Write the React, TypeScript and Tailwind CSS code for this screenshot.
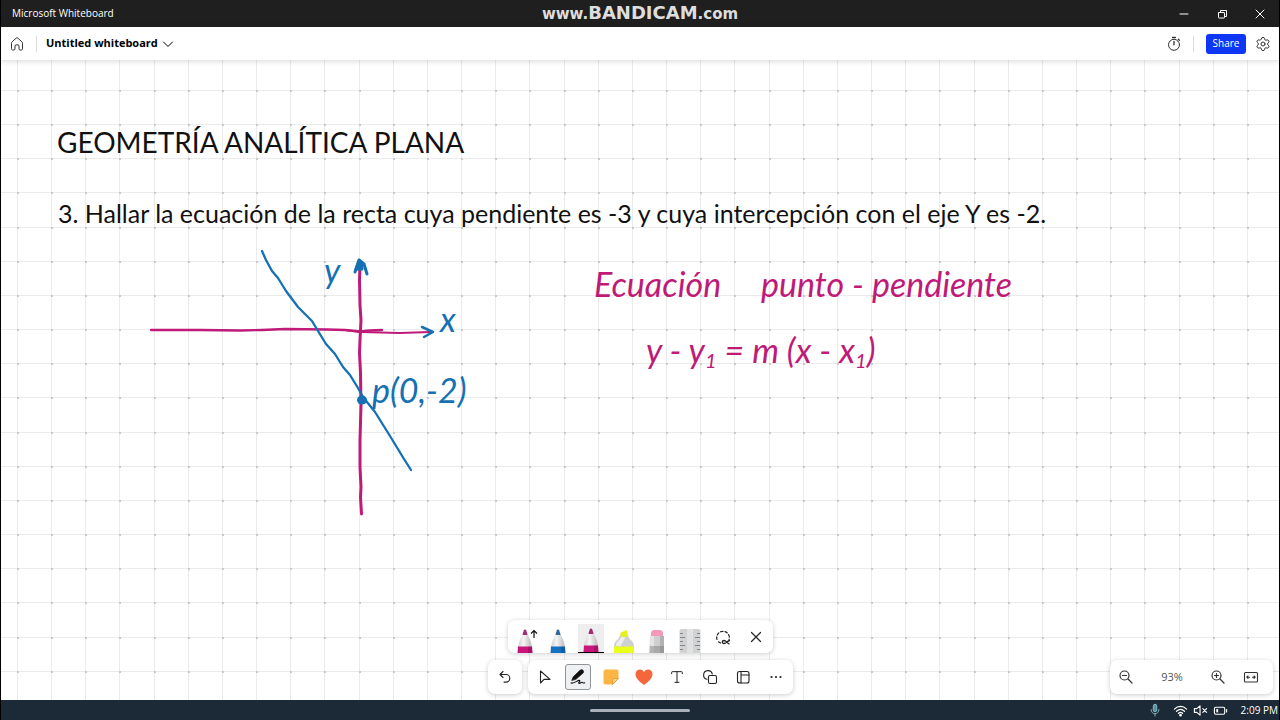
import React from 'react';
import clsx from 'clsx';
import { Settings, Type } from 'lucide-react';

const PINK = '#c01a78';
const BLUE = '#1570b4';

type IconProps = {
  size?: number;
  viewBox?: string;
  strokeWidth?: number;
  children: React.ReactNode;
};

function Icon({ size = 16, viewBox = '0 0 16 16', strokeWidth = 1, children }: IconProps) {
  return (
    <svg
      width={size}
      height={size}
      viewBox={viewBox}
      fill="none"
      stroke="currentColor"
      strokeWidth={strokeWidth}
      strokeLinecap="round"
      strokeLinejoin="round"
      aria-hidden="true"
    >
      {children}
    </svg>
  );
}

function TitleBar() {
  return (
    <div className="grid h-[27px] shrink-0 grid-cols-3 items-center bg-[#1f1f1f] text-white">
      <span className="pl-[11px] text-[10px]">Microsoft Whiteboard</span>
      <span className="whitespace-nowrap text-center font-['DejaVu_Sans'] text-[15px] font-bold leading-5 text-[#dedede]">
        www.<b className="text-[18px]">BANDICAM</b>.com
      </span>
      <div className="flex justify-end gap-3 pr-[6px]">
        <button aria-label="Minimize" className="flex h-[26px] w-[26px] items-center justify-center">
          <Icon>
            <path d="M4 8h8" />
          </Icon>
        </button>
        <button aria-label="Restore" className="flex h-[26px] w-[26px] items-center justify-center">
          <Icon>
            <rect x="4.5" y="6.5" width="6" height="5.5" rx="0.5" />
            <path d="M6.5 6.5V4.5h6v6h-2" />
          </Icon>
        </button>
        <button aria-label="Close" className="flex h-[26px] w-[26px] items-center justify-center">
          <Icon>
            <path d="M4 4l8 8M12 4l-8 8" />
          </Icon>
        </button>
      </div>
    </div>
  );
}

function Header() {
  return (
    <header className="z-10 flex h-[33px] shrink-0 items-center justify-between bg-white pl-[7px] pr-2 shadow-[0_1px_6px_rgba(0,0,0,0.16)]">
      <div className="flex items-center">
        <button aria-label="Home" className="flex w-[17px] justify-center text-[#333]">
          <Icon>
            <path d="M2.5 7.2c0-.6.2-1 .6-1.4L7.2 2.1a1.2 1.2 0 0 1 1.6 0l4.1 3.7c.4.4.6.8.6 1.4v5.6c0 .7-.4 1.2-1.1 1.2h-1.3c-.7 0-1.1-.4-1.1-1.1V10c0-.7-.4-1.1-1-1.1H7c-.6 0-1 .4-1 1.1v2.900c0 .7-.4 1.1-1.1 1.1H3.6c-.7 0-1.1-.5-1.1-1.2z" />
          </Icon>
        </button>
        <span className="ml-[11px] h-4 w-px bg-[#dcdcdc]" />
        <button className="ml-[9px] flex items-center gap-1 text-[11px] font-bold text-black">
          Untitled whiteboard
          <Icon size={12} viewBox="0 0 12 12">
            <path d="M1.5 4L6 8.5 10.5 4" />
          </Icon>
        </button>
      </div>
      <div className="flex items-center">
        <button aria-label="Timer" className="text-[#333]">
          <Icon>
            <circle cx="8" cy="8.8" r="5.5" />
            <path d="M8 5.5v3.3M6.5 1.5h3M12.3 3.2l1.1 1.1" strokeWidth="1.3" />
          </Icon>
        </button>
        <span className="ml-[11px] h-4 w-px bg-[#dcdcdc]" />
        <button className="ml-[12px] h-5 w-10 rounded-[3px] bg-[#0d37f5] text-[10px] font-medium text-white">
          Share
        </button>
        <button aria-label="Settings" className="ml-[9px] text-[#333]">
          <Settings size={16} strokeWidth={1.5} />
        </button>
      </div>
    </header>
  );
}

// Grid cells are a little over 34px, so six of them share a 205px tile
function Grid() {
  const steps = [0, 34, 68, 102, 137, 171];
  return (
    <svg className="absolute inset-0 h-full w-full" aria-hidden="true">
      <defs>
        <pattern id="grid" x="16" y="30" width="205" height="205" patternUnits="userSpaceOnUse">
          {steps.map((s) => (
            <g key={s} fill="#ebebeb">
              <rect x={s} y="0" width="1" height="205" />
              <rect x="0" y={s} width="205" height="1" />
            </g>
          ))}
          {steps.map((x) =>
            steps.map((y) => <rect key={`${x}-${y}`} x={x} y={y} width="2" height="2" fill="#cacaca" />)
          )}
        </pattern>
      </defs>
      <rect width="100%" height="100%" fill="url(#grid)" />
    </svg>
  );
}

function Graph() {
  return (
    <svg
      className="absolute left-[139px] top-[180px]"
      width="310"
      height="290"
      viewBox="140 180 310 290"
      fill="none"
      strokeWidth="2.3"
      strokeLinecap="round"
      strokeLinejoin="round"
      role="img"
      aria-label="Recta en el plano"
    >
      <g stroke={PINK}>
        <path d="M151 270L200 270 240 270.5 262 270 285 269 327 269.5 345 270 360 271.5 370 270.5 382 270" />
        <path d="M345 270L360 272 400 273 430 272" strokeWidth="2" />
        <path
          d="M360 203L359.5 220 360 245 361 260 360 280 359.5 293 360.5 313 361 345 360 380 360 407 361 427 360.5 437 361.5 454"
          strokeWidth="3"
        />
      </g>
      <g stroke={BLUE}>
        <path d="M262 191L266 200 272 211 278 218 286 231 298 247 312 261 318 271 326 284 335 294 343 307 350 315 358 328 363 337 375 352 390 376 404 399 411 410" />
        <path d="M355 212L359 200 364 204 367 214" strokeWidth="3" />
        <path d="M359 201L356 209 362 209 361 202" strokeWidth="3" fill={BLUE} />
        <path d="M422 267L433 272 424 277" strokeWidth="2.5" />
        <ellipse cx="362" cy="340" rx="5" ry="4.5" fill={BLUE} stroke="none" />
      </g>
    </svg>
  );
}

const inkLabels = [
  { text: 'y', className: 'left-[323px] top-[190px] text-[34px] text-[#1570b4]' },
  { text: 'x', className: 'left-[439px] top-[239px] text-[34px] text-[#1570b4]' },
  { text: 'p(0,-2)', className: 'left-[371px] top-[310px] text-[34px] text-[#1570b4]' },
  { text: 'Ecuación', className: 'left-[593px] top-[204px] text-[34px] text-[#c01a78]' },
  { text: 'punto - pendiente', className: 'left-[760px] top-[204px] text-[34px] text-[#c01a78]' },
];

function Canvas() {
  return (
    <>
      <Grid />
      <h1 className="absolute left-[56px] top-[66px] whitespace-nowrap font-['Lato',sans-serif] text-[28px] leading-8 text-[#111]">
        GEOMETRÍA ANALÍTICA PLANA
      </h1>
      <p className="absolute left-[57px] top-[137px] whitespace-nowrap font-['Lato',sans-serif] text-[25px] leading-8 text-[#111]">
        3. Hallar la ecuación de la recta cuya pendiente es -3 y cuya intercepción con el eje Y es -2.
      </p>
      <Graph />
      {inkLabels.map((label) => (
        <span
          key={label.text}
          className={clsx("absolute whitespace-nowrap font-['Lato',sans-serif] italic leading-10", label.className)}
        >
          {label.text}
        </span>
      ))}
      <span className="absolute left-[645px] top-[270px] whitespace-nowrap font-['Lato',sans-serif] text-[34px] italic leading-10 text-[#c01a78]">
        y - y<sub className="text-[20px]">1</sub> = m (x - x<sub className="text-[20px]">1</sub>)
      </span>
    </>
  );
}

function Pen({ color }: { color: string }) {
  return (
    <svg width="16" height="24" viewBox="0 0 16 24" aria-hidden="true">
      <defs>
        <linearGradient id="pen-body">
          <stop offset="0" stopColor="#d2d2d2" />
          <stop offset="0.4" stopColor="#f4f4f4" />
          <stop offset="1" stopColor="#b9b9b9" />
        </linearGradient>
      </defs>
      <path d="M6 4h4c2 4 4.5 9 5 14H1C1.5 13 4 8 6 4z" fill="url(#pen-body)" />
      <path d="M5.5 5.5L7 1.3c.4-1 1.600-1 2 0l1.5 4.2c-1 .8-4 .8-5 0z" fill={color} />
      <path d="M5.5 5.500L7 1.3c.4-1 1.6-1 2 0l1.5 4.2c-1 .8-4 .8-5 0z" fill="#555" opacity="0.35" />
      <path d="M1 17.5h14l.5 6.5H.5z" fill={color} />
      <path d="M11 17.5h4l.5 6.5H11z" fill="#000" opacity="0.15" />
    </svg>
  );
}

function Highlighter() {
  return (
    <svg width="22" height="24" viewBox="0 0 22 24" aria-hidden="true">
      <path d="M7 5.5h8c.3 3 1.5 4 3.5 6 1.5 1.6 2.5 3 2.5 6.5H1c0-3.5 1-5 2.5-6.5C5.5 9.5 6.7 8.5 7 5.5z" fill="#cfd0d1" />
      <path d="M8 8h4c0 3-3 5-4 9H3c0-5 4-5 5-9z" fill="#ededed" />
      <path d="M7.500 3.500L14 1v2.500h.5v4c-2 1-5 1-7 0z" fill="#e3f01c" />
      <path d="M1 17.500h20V24H1z" fill="#eaff1a" />
    </svg>
  );
}

function Eraser() {
  return (
    <svg width="16" height="24" viewBox="0 0 16 24" aria-hidden="true">
      <path d="M2 7V4c0-2 1.5-3 3-3h6c1.5 0 3 1 3 3v3z" fill="#f49ab8" />
      <path d="M1 7h14v17H.5z" fill="#cfcfcf" />
      <path d="M1 7h4v17H.5z" fill="#e4e4e4" />
      <path d="M11 7h4v17h-4z" fill="#b2b2b2" />
      <path d="M1 17h14v7H.5z" fill="#777" opacity="0.45" />
    </svg>
  );
}

function Ruler() {
  return (
    <svg width="22" height="25" viewBox="0 0 22 25" aria-hidden="true">
      <rect x="0.5" y="1" width="21" height="26" rx="2" fill="#d0d2d3" />
      <rect x="8" y="1" width="6" height="25" fill="#e0e1e1" />
      <path
        d="M1 5.5h3M1 9.5h5M1 13.5h3M1 17.5h5M1 21.5h3M21 5.5h-3M21 9.5h-5M21 13.5h-3M21 17.5h-5M21 21.5h-3"
        stroke="#858585"
      />
    </svg>
  );
}

type Tool = { label: string; icon: React.ReactNode; selected?: boolean };

const penTools: Tool[] = [
  {
    label: 'Arrow pen',
    icon: (
      <span className="relative">
        <Pen color="#c9147c" />
        <svg
          className="absolute left-[13px] top-0"
          width="8"
          height="10"
          viewBox="0 0 8 10"
          fill="none"
          stroke="#111"
          strokeWidth="1.2"
        >
          <path d="M4 9V1.5M1 4.5l3-3 3 3" />
        </svg>
      </span>
    ),
  },
  { label: 'Blue pen', icon: <Pen color="#1570c0" /> },
  { label: 'Pink pen', icon: <Pen color="#c9147c" />, selected: true },
  { label: 'Highlighter', icon: <Highlighter /> },
  { label: 'Eraser', icon: <Eraser /> },
  { label: 'Ruler', icon: <Ruler /> },
];

const mainTools: Tool[] = [
  {
    label: 'Select',
    icon: (
      <Icon strokeWidth={1.1}>
        <path d="M3.5 2v12l3.5-3.6h6z" />
      </Icon>
    ),
  },
  {
    label: 'Inking',
    selected: true,
    icon: (
      <Icon size={18}>
        <path d="M2.5 10.800l1.3-3 6-5.800c1.900-1.500 4.100.5 2.700 2.500L6.200 10z" fill="#111" stroke="#111" strokeWidth="0.6" />
        <path d="M1.800 13.300c3.200.9 6-2.800 7.400-2.300 1.5.6-1.700 2.400-.2 2.700 1.200.2 1.700-1.400 2.600-1 .6.3.9 1.100 2.400.5" stroke="#111" />
      </Icon>
    ),
  },
  {
    label: 'Notes',
    icon: (
      <svg width="18" height="18" viewBox="0 0 18 18" aria-hidden="true">
        <path d="M3.5 1.5h11a2 2 0 0 1 2 2v7l-6 6h-7a2 2 0 0 1-2-2v-11a2 2 0 0 1 2-2z" fill="#fdb544" />
        <path d="M16.5 10.5l-6 6v-4a2 2 0 0 1 2-2z" fill="#ffd978" stroke="#ee9338" strokeWidth="0.9" />
      </svg>
    ),
  },
  {
    label: 'Reactions',
    icon: (
      <svg width="20" height="18" viewBox="0 0 20 18" aria-hidden="true">
        <path d="M10 17C6 14 1.5 10.5 1.5 6c0-5 6.5-6 8.500-2 2-4 8.500-3 8.500 2 0 4.500-4.500 8-8.500 11z" fill="#f4673c" />
      </svg>
    ),
  },
  { label: 'Text', icon: <Type size={16} strokeWidth={1.5} /> },
  {
    label: 'Shapes',
    icon: (
      <Icon strokeWidth={1.1}>
        <path d="M5 10.3A4.4 4.4 0 1 1 10.3 5" />
        <rect x="6.5" y="6.5" width="8" height="8" rx="1.5" />
      </Icon>
    ),
  },
  {
    label: 'Templates',
    icon: (
      <Icon strokeWidth={1.1}>
        <rect x="2.5" y="2.5" width="11.5" height="11.5" rx="2" />
        <path d="M6 2.5v11.5M6 6h8" />
      </Icon>
    ),
  },
  {
    label: 'More',
    icon: (
      <Icon>
        <g fill="currentColor" stroke="none">
          <circle cx="3.5" cy="8" r="1.1" />
          <circle cx="8" cy="8" r="1.1" />
          <circle cx="12.5" cy="8" r="1.1" />
        </g>
      </Icon>
    ),
  },
];

const panel = 'bg-white shadow-[0_1px_5px_rgba(0,0,0,0.2)] rounded-[7px]';

function Toolbars() {
  return (
    <div className="absolute inset-x-0 bottom-[6px] flex flex-col items-center gap-[7px] text-[#222]">
      <div className={clsx(panel, 'flex h-[33px] items-center gap-[7px] px-1')}>
        {penTools.map((tool) => (
          <button
            key={tool.label}
            aria-label={tool.label}
            className={clsx(
              'flex w-[26px] items-end justify-center self-end',
              tool.selected ? 'h-[29px] border-b border-black bg-[#eee]' : 'h-6'
            )}
          >
            {tool.icon}
          </button>
        ))}
        <button aria-label="Lasso select" className="flex h-[26px] w-[26px] items-center justify-center">
          <Icon strokeWidth={1.2}>
            <path d="M2 10.5A6.3 6.3 0 1 1 14 10.5" strokeDasharray="2.6 2" />
            <path d="M3.5 12.8l2 1.2" />
            <path d="M14.5 11.5c-2 .3-3.5 3-5.5 3-2.2 0-2.2-3 0-3 2 0 3 2.5 5 3.3" strokeWidth="1.3" />
          </Icon>
        </button>
        <button aria-label="Close inking toolbar" className="flex h-[26px] w-[26px] items-center justify-center">
          <Icon strokeWidth={1.2}>
            <path d="M3.5 3.5l9 9M12.5 3.5l-9 9" />
          </Icon>
        </button>
      </div>
      <div className="flex gap-[6px]">
        <button aria-label="Undo" className={clsx(panel, 'flex h-[34px] w-[34px] items-center justify-center')}>
          <Icon strokeWidth={1.1}>
            <path d="M6 2.5L3 5.5l3 3M3 5.5h6a3.8 3.8 0 0 1 0 7.6H7" />
          </Icon>
        </button>
        <div className={clsx(panel, 'flex h-[34px] items-center gap-[7px] px-1')}>
          {mainTools.map((tool) => (
            <button
              key={tool.label}
              aria-label={tool.label}
              className={clsx(
                'flex h-[26px] w-[26px] items-center justify-center rounded-[3px]',
                tool.selected && 'border border-[#8f9499] bg-[#eef0f2]'
              )}
            >
              {tool.icon}
            </button>
          ))}
        </div>
      </div>
    </div>
  );
}

function ZoomControls() {
  return (
    <div className={clsx(panel, 'absolute bottom-[6px] right-[6px] flex h-[34px] items-center pl-2 pr-[14px] text-[#333]')}>
      <button aria-label="Zoom out">
        <Icon strokeWidth={1.2}>
          <circle cx="6.5" cy="6.5" r="4.5" />
          <path d="M10 10l4 4M4.5 6.5h4" />
        </Icon>
      </button>
      <span className="w-[76px] text-center text-[11px] text-[#555]">93%</span>
      <button aria-label="Zoom in">
        <Icon strokeWidth={1.2}>
          <circle cx="6.5" cy="6.5" r="4.5" />
          <path d="M10 10l4 4M4.5 6.5h4M6.5 4.5v4" />
        </Icon>
      </button>
      <button aria-label="Fit to screen" className="ml-[17px]">
        <Icon strokeWidth={1.1}>
          <rect x="1.5" y="3.5" width="13" height="9.5" rx="1" />
          <path d="M4 8.2h2.5M9.5 8.2H12M5 7L3.8 8.2 5 9.4M11 7l1.2 1.2L11 9.4" />
        </Icon>
      </button>
    </div>
  );
}

function Taskbar() {
  return (
    <footer className="grid h-5 shrink-0 grid-cols-3 items-center bg-[#1c2936] text-white">
      <span />
      <span className="h-[3px] w-[100px] justify-self-center rounded-full bg-[#a9b0b8]" />
      <div className="flex items-center justify-end pr-px">
        <span className="mr-[11px] text-[#8cc3cf]">
          <Icon size={14}>
            <rect x="6" y="1.5" width="4" height="8.5" rx="2" fill="#5b8f9c" />
            <path d="M3.5 7.5c0 6.5 9 6.5 9 0M8 12.5V15" />
          </Icon>
        </span>
        <span className="mr-[5px]">
          <Icon size={15} strokeWidth={1.3}>
            <path d="M1.5 6.5c3.8-3.8 9.2-3.8 13 0M3.7 8.8c2.6-2.5 6-2.5 8.6 0M5.8 11c1.4-1.2 3-1.2 4.4 0" />
            <circle cx="8" cy="13" r="0.8" fill="currentColor" />
          </Icon>
        </span>
        <span className="mr-[5px]">
          <Icon size={15} strokeWidth={1.2}>
            <path d="M1.5 6v4h2.5l3.5 3V3L4 6zM10.5 6l4 4M14.5 6l-4 4" />
          </Icon>
        </span>
        <span className="mr-[13px]">
          <Icon size={15} strokeWidth={1.2}>
            <rect x="1.5" y="4.5" width="11" height="7.5" rx="1.5" />
            <path d="M14.5 7v2.5" />
            <path d="M3.5 6.5h2v3.5h-2z" fill="currentColor" stroke="none" />
          </Icon>
        </span>
        <span className="whitespace-nowrap text-[10px]">2:09 PM</span>
      </div>
    </footer>
  );
}

export default function App() {
  return (
    <div className="flex h-screen flex-col border-x border-black bg-white font-['Open_Sans','Noto_Sans',sans-serif]">
      <TitleBar />
      <Header />
      <main className="relative flex-1 overflow-hidden">
        <Canvas />
        <Toolbars />
        <ZoomControls />
      </main>
      <Taskbar />
    </div>
  );
}
